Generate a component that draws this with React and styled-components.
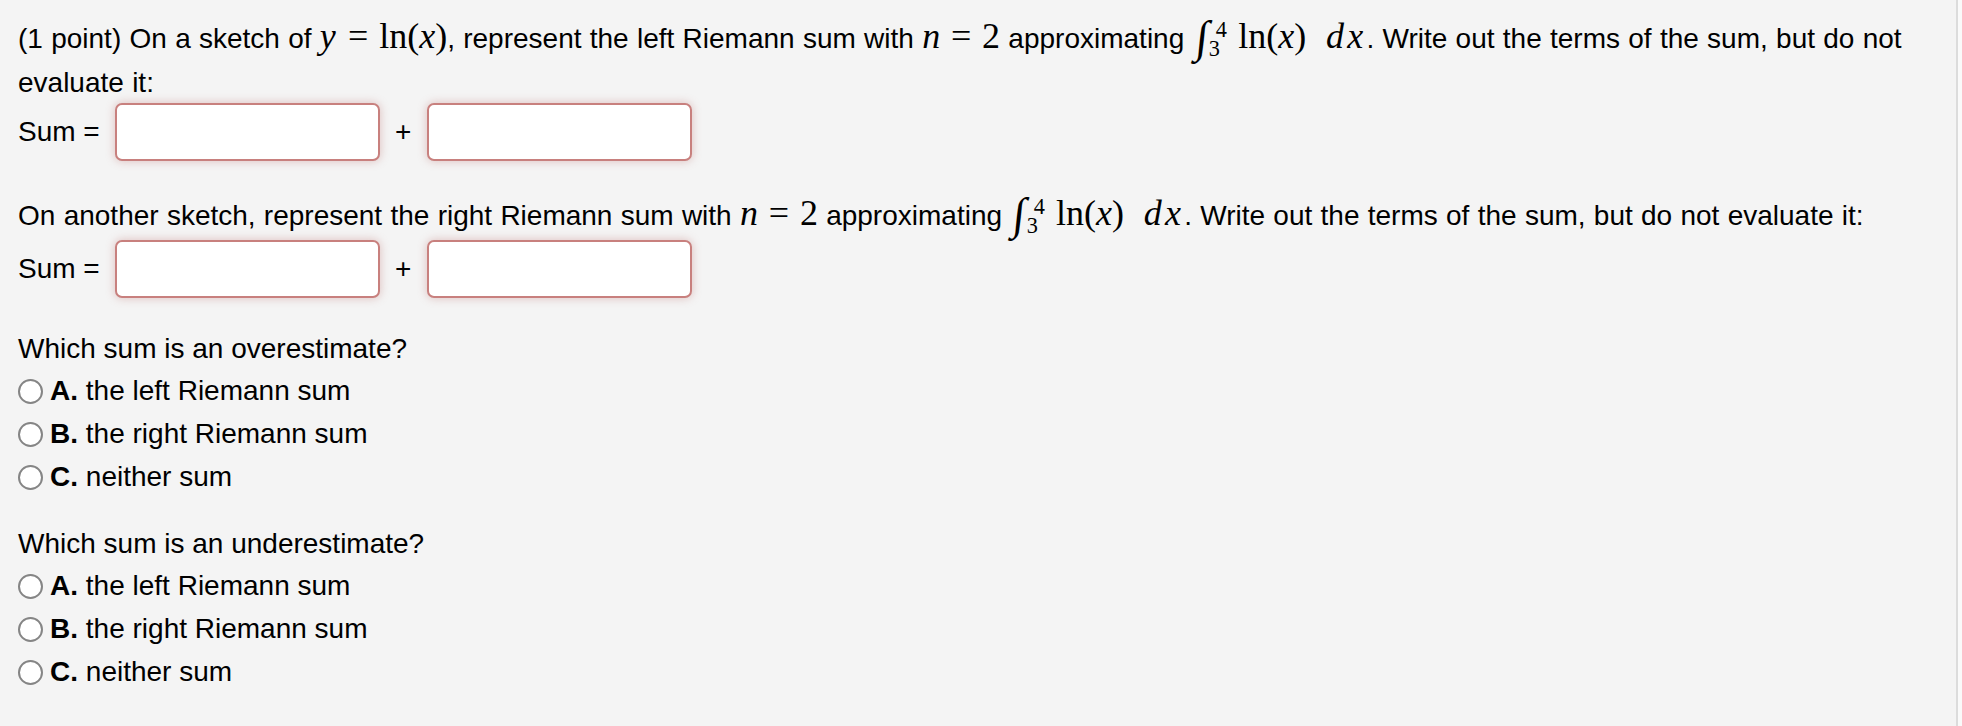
import React from 'react'
import styled, { createGlobalStyle } from 'styled-components'

const GlobalStyle = createGlobalStyle`
  html, body {
    margin: 0;
    padding: 0;
    background: #fafafa;
  }
  body {
    font-family: "Liberation Sans", Arial, Helvetica, sans-serif;
    color: #000;
  }
`

const Page = styled.div`
  box-sizing: border-box;
  width: 1958px;
  min-height: 726px;
  padding: 17px 22px 0 18px;
  background: #f4f4f4;
  border-right: 2px solid #dcdcdc;
  font-size: 28px;
  line-height: 44px;
`

const Para = styled.p`
  margin: ${props => props.$top || 0}px 0 0;
  word-spacing: 0.5px;
`

const SumRow = styled.div`
  display: flex;
  align-items: center;
  height: 58px;
  margin-top: ${props => props.$top || 0}px;
`

const SumLabel = styled.span`
  margin-right: 15px;
`

const Blank = styled.input.attrs({ type: 'text' })`
  box-sizing: border-box;
  width: 265px;
  height: 58px;
  margin: 0;
  border: 2px solid #c8807e;
  border-radius: 7px;
  background: #fff;
  box-shadow: 0 0 10px rgba(185, 100, 98, 0.38);
  outline: none;
  font: inherit;
`

const Plus = styled.span`
  width: 47px;
  text-align: center;
`

const Question = styled.p`
  margin: ${props => props.$top || 0}px 0 0;
  line-height: 40px;
`

const Option = styled.label`
  display: flex;
  align-items: center;
  height: 43px;
  gap: 7px;
`

const Radio = styled.input.attrs({ type: 'radio' })`
  appearance: none;
  box-sizing: border-box;
  width: 25px;
  height: 25px;
  margin: 2px 0 0;
  border: 2px solid #858585;
  border-radius: 50%;
  background: #fff;
`

const Letter = styled.b`
  margin-right: 0.28em;
`

const Math = styled.span`
  font-family: "Liberation Serif", "DejaVu Serif", "Times New Roman", serif;
  font-size: 36px;
  line-height: 1;
  white-space: nowrap;
  word-spacing: 0;
`

const Var = styled.i`
  font-style: italic;
  letter-spacing: ${props => props.$spread || 0}em;
`

const Rel = styled.span`
  margin: 0 0.3em;
`

const IntSign = styled.span`
  display: inline-block;
  font-size: 1.25em;
  line-height: 0;
  margin: 0 2px 0 3px;
  transform: translateY(4px) skewX(-6deg);
`

const Limits = styled.span`
  display: inline-flex;
  flex-direction: column;
  vertical-align: middle;
  font-size: 0.62em;
  line-height: 0.86;
  margin: 0 0.5em 0 0;
  position: relative;
  top: -1px;
`

const Sup = styled.span`
  margin-left: 6px;
`

const Sub = styled.span`
  margin-left: -1px;
`

const Gap = styled.span`
  margin-left: 0.55em;
`

const LnX = () => (
  <>ln(<Var>x</Var>)</>
)

const Integral = () => (
  <Math>
    <IntSign>∫</IntSign>
    <Limits>
      <Sup>4</Sup>
      <Sub>3</Sub>
    </Limits>
    <LnX />
    <Gap />
    <Var $spread={0.09}>dx</Var>
  </Math>
)

const NEq2 = () => (
  <Math>
    <Var>n</Var>
    <Rel>=</Rel>2
  </Math>
)

const SumInputs = ({ top }) => (
  <SumRow $top={top}>
    <SumLabel>Sum =</SumLabel>
    <Blank />
    <Plus>+</Plus>
    <Blank />
  </SumRow>
)

const Choices = ({ name }) => (
  <>
    <Option>
      <Radio name={name} />
      <span><Letter>A.</Letter>the left Riemann sum</span>
    </Option>
    <Option>
      <Radio name={name} />
      <span><Letter>B.</Letter>the right Riemann sum</span>
    </Option>
    <Option>
      <Radio name={name} />
      <span><Letter>C.</Letter>neither sum</span>
    </Option>
  </>
)

export default function App() {
  return (
    <Page>
      <GlobalStyle />
      <Para>
        (1 point) On a sketch of{' '}
        <Math>
          <Var $spread={0.04}>y</Var>
          <Rel>=</Rel>
          <LnX />
        </Math>
        , represent the left Riemann sum with <NEq2 /> approximating <Integral />. Write out the
        terms of the sum, but do not evaluate it:
      </Para>
      <SumInputs top={-2} />

      <Para $top={33}>
        On another sketch, represent the right Riemann sum with <NEq2 /> approximating{' '}
        <Integral />. Write out the terms of the sum, but do not evaluate it:
      </Para>
      <SumInputs top={2} />

      <Question $top={31}>Which sum is an overestimate?</Question>
      <Choices name="over" />

      <Question $top={26}>Which sum is an underestimate?</Question>
      <Choices name="under" />
    </Page>
  )
}
